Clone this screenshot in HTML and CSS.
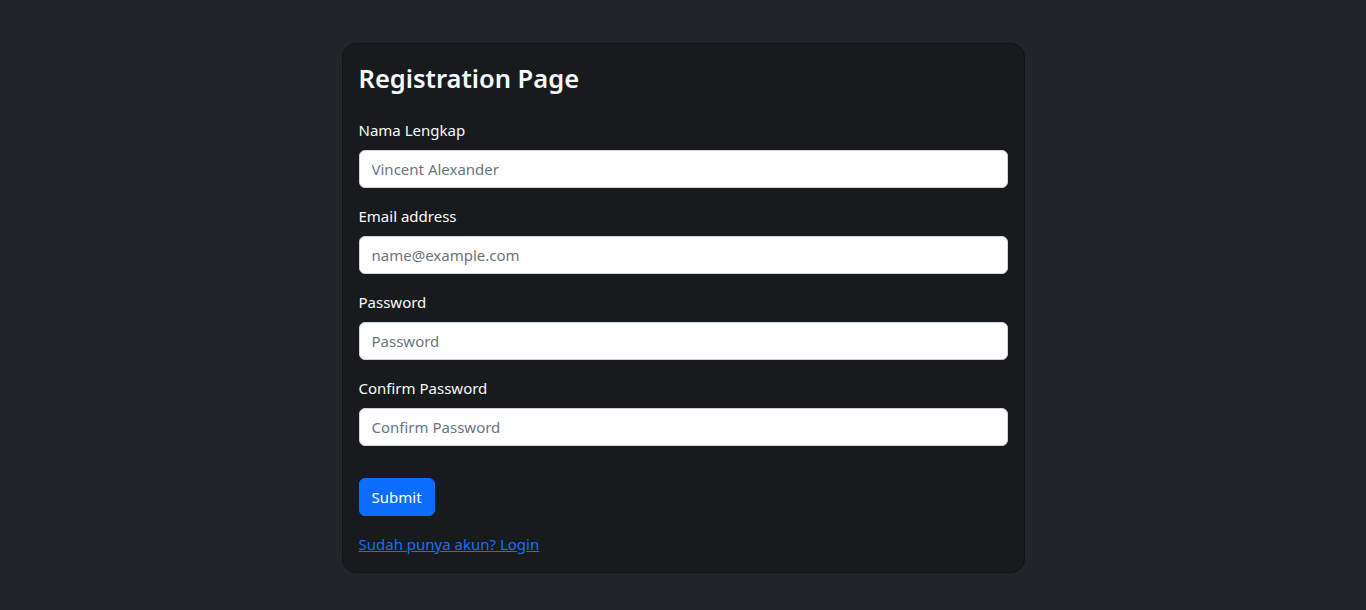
FILE: index.html
```html
<!DOCTYPE html>
<html lang="id">
<head>
<meta charset="utf-8">
<title>Registration Page</title>
<link rel="stylesheet" href="styles.css">
</head>
<body>
<main class="page">
  <div class="card">
    <h3 class="card-title">Registration Page</h3>
    <form class="form">
      <div class="group">
        <label class="label" for="nama">Nama Lengkap</label>
        <input class="input" id="nama" type="text" placeholder="Vincent Alexander">
      </div>
      <div class="group">
        <label class="label" for="email">Email address</label>
        <input class="input" id="email" type="email" placeholder="name@example.com">
      </div>
      <div class="group">
        <label class="label" for="pw">Password</label>
        <input class="input" id="pw" type="password" placeholder="Password">
      </div>
      <div class="group">
        <label class="label" for="cpw">Confirm Password</label>
        <input class="input" id="cpw" type="password" placeholder="Confirm Password">
      </div>
      <div class="actions">
        <button class="btn" type="button">Submit</button>
      </div>
    </form>
    <a class="link" href="#">Sudah punya akun? Login</a>
  </div>
</main>
</body>
</html>
```
FILE: styles.css
```css
* { box-sizing: border-box; }
html, body { margin: 0; padding: 0; }
body {
  background: #212529;
  color: #dee2e6;
  font-family: "Noto Sans", "Open Sans", sans-serif;
  font-size: 15px;
  line-height: 24px;
  height: 610px;
  overflow: hidden;
}
.page {
  display: flex;
  justify-content: center;
  padding-top: 43px;
}
.card {
  width: 683px;
  background: #181b1e;
  border: 1px solid #101214;
  border-radius: 14px;
  padding: 16px;
  display: flex;
  flex-direction: column;
  align-items: flex-start;
}
.card-title {
  margin: 0 0 24px;
  font-size: 25.5px;
  line-height: 34px;
  padding-top: 1px;
  height: 34px;
  font-weight: 600;
  color: #f8f9fa;
}
.form { width: 100%; }
.group { margin-bottom: 16px; }
.label {
  display: block;
  margin-bottom: 8px;
  color: #f8f9fa;
  font-size: 15px;
  line-height: 24px;
}
.input {
  display: block;
  width: 100%;
  height: 38px;
  padding: 6px 12px;
  font: inherit;
  font-size: 15px;
  line-height: 24px;
  color: #212529;
  background: #fff;
  border: 1px solid #ced4da;
  border-radius: 6px;
}
.input::placeholder { color: #6c757d; }
.actions { padding-top: 16px; margin-bottom: 16px; }
.btn {
  height: 38px;
  padding: 6px 12px;
  font: inherit;
  font-size: 15px;
  line-height: 24px;
  color: #fff;
  background: #0d6efd;
  border: 1px solid #0d6efd;
  border-radius: 6px;
}
.link {
  color: #1b6ef0;
  text-decoration: underline;
  font-size: 15px;
  line-height: 24px;
}
```
